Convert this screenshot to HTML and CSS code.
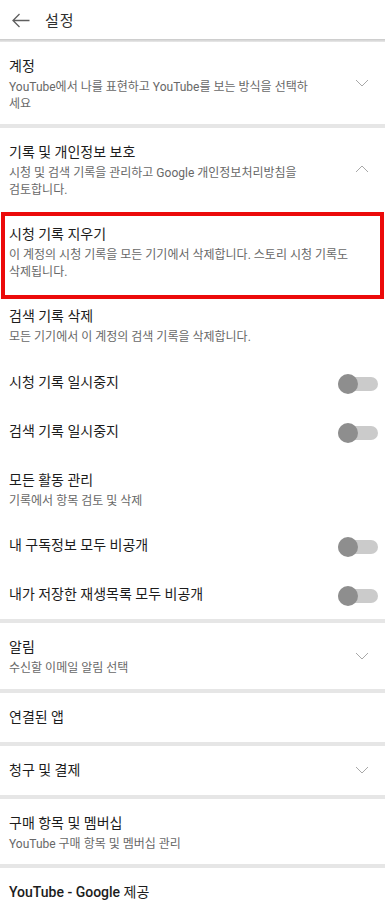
FILE: index.html
```html
<!DOCTYPE html>
<html lang="ko">
<head>
<meta charset="utf-8">
<title>설정</title>
<link rel="stylesheet" href="styles.css">
</head>
<body>
<header class="topbar">
  <svg class="back" width="18" height="15" viewBox="0 0 18 15" aria-hidden="true">
    <path d="M17.5 7.5H1 M7.5 1 L1 7.5 L7.5 14" fill="none" stroke="#5f5f5f" stroke-width="1.3"/>
  </svg>
  <span class="topbar-title">설정</span>
</header>
<div class="topbar-shadow"></div>

<section class="card">
  <div class="row">
    <div class="text">
      <div class="title">계정</div>
      <div class="sub">YouTube에서 나를 표현하고 YouTube를 보는 방식을 선택하<br>세요</div>
    </div>
    <svg class="chev" width="14" height="8" viewBox="0 0 14 8"><polyline points="1,1 7,7 13,1" fill="none" stroke="#a8a8a8" stroke-width="1"/></svg>
  </div>
</section>

<section class="card">
  <div class="row">
    <div class="text">
      <div class="title">기록 및 개인정보 보호</div>
      <div class="sub">시청 및 검색 기록을 관리하고 Google 개인정보처리방침을<br>검토합니다.</div>
    </div>
    <svg class="chev" width="14" height="8" viewBox="0 0 14 8"><polyline points="1,7 7,1 13,7" fill="none" stroke="#a8a8a8" stroke-width="1"/></svg>
  </div>
  <div class="row marked">
    <div class="text">
      <div class="title">시청 기록 지우기</div>
      <div class="sub">이 계정의 시청 기록을 모든 기기에서 삭제합니다. 스토리 시청 기록도<br>삭제됩니다.</div>
    </div>
    <div class="highlight"></div>
  </div>
  <div class="row">
    <div class="text">
      <div class="title">검색 기록 삭제</div>
      <div class="sub">모든 기기에서 이 계정의 검색 기록을 삭제합니다.</div>
    </div>
  </div>
  <div class="row">
    <div class="text"><div class="title">시청 기록 일시중지</div></div>
    <div class="toggle"><span class="knob"></span></div>
  </div>
  <div class="row">
    <div class="text"><div class="title">검색 기록 일시중지</div></div>
    <div class="toggle"><span class="knob"></span></div>
  </div>
  <div class="row">
    <div class="text">
      <div class="title">모든 활동 관리</div>
      <div class="sub">기록에서 항목 검토 및 삭제</div>
    </div>
  </div>
  <div class="row">
    <div class="text"><div class="title">내 구독정보 모두 비공개</div></div>
    <div class="toggle"><span class="knob"></span></div>
  </div>
  <div class="row">
    <div class="text"><div class="title">내가 저장한 재생목록 모두 비공개</div></div>
    <div class="toggle"><span class="knob"></span></div>
  </div>
</section>

<section class="card">
  <div class="row">
    <div class="text">
      <div class="title">알림</div>
      <div class="sub">수신할 이메일 알림 선택</div>
    </div>
    <svg class="chev" width="14" height="8" viewBox="0 0 14 8"><polyline points="1,1 7,7 13,1" fill="none" stroke="#a8a8a8" stroke-width="1"/></svg>
  </div>
</section>

<section class="card">
  <div class="row">
    <div class="text"><div class="title">연결된 앱</div></div>
  </div>
</section>

<section class="card">
  <div class="row">
    <div class="text"><div class="title">청구 및 결제</div></div>
    <svg class="chev" width="14" height="8" viewBox="0 0 14 8"><polyline points="1,1 7,7 13,1" fill="none" stroke="#a8a8a8" stroke-width="1"/></svg>
  </div>
</section>

<section class="card">
  <div class="row">
    <div class="text">
      <div class="title">구매 항목 및 멤버십</div>
      <div class="sub">YouTube 구매 항목 및 멤버십 관리</div>
    </div>
  </div>
</section>

<section class="card">
  <div class="row">
    <div class="text"><div class="title"><span class="strong">YouTube - Google</span> 제공</div></div>
  </div>
</section>
</body>
</html>
```

FILE: styles.css
```css
html, body {
  margin: 0;
  padding: 0;
}
body {
  background: #e6e6e6;
  font-family: Roboto, "Noto Sans CJK KR", sans-serif;
  color: #1c1c1c;
  width: 385px;
  overflow: hidden;
}
.topbar {
  height: 39px;
  background: #fff;
  display: flex;
  align-items: center;
  padding-left: 12px;
  gap: 15px;
}
.back {
  display: block;
  margin-top: 2px;
}
.topbar-title {
  font-size: 15px;
  letter-spacing: 1px;
  color: #303030;
}
.topbar-shadow {
  height: 3px;
  background: linear-gradient(#c9c9c9, #e9e9e9);
}
.card {
  background: #fff;
  margin-bottom: 4px;
}
.row {
  display: flex;
  align-items: center;
  padding: 12px 0 12px 9px;
}
.text {
  flex: 1;
  min-width: 0;
}
.title {
  font-size: 14px;
  line-height: 25px;
  color: #1c1c1c;
  white-space: nowrap;
}
.strong {
  font-weight: 500;
}
.sub {
  font-size: 12px;
  line-height: 16.5px;
  color: #686868;
  white-space: nowrap;
}
.chev {
  display: block;
  flex: none;
  margin-right: 16px;
}
.toggle {
  position: relative;
  flex: none;
  width: 40px;
  height: 14px;
  border-radius: 7px;
  background: #cbcbcb;
  margin-right: 7px;
  margin-top: 3px;
}
.knob {
  position: absolute;
  left: 0;
  top: -3px;
  width: 20px;
  height: 20px;
  border-radius: 50%;
  background: #8e8e8e;
}
.marked {
  position: relative;
}
.highlight {
  position: absolute;
  left: 1px;
  right: 1px;
  top: 2px;
  bottom: -7px;
  border: 4px solid #ec0a0a;
  z-index: 2;
  pointer-events: none;
}
```
